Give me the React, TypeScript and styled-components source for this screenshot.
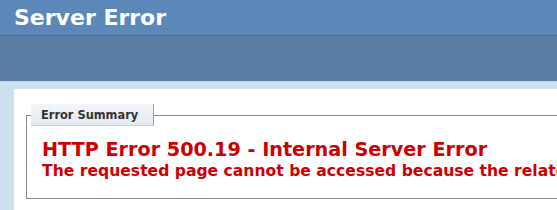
import React from "react";
import styled, { createGlobalStyle } from "styled-components";

const Global = createGlobalStyle`
  html, body { margin: 0; padding: 0; }
  body {
    background: #cde0ee;
    font-family: "DejaVu Sans", Verdana, sans-serif;
    overflow: hidden;
  }
`;

const Header = styled.header`
  box-sizing: border-box;
  height: 35px;
  padding: 5px 14px 0 14px;
  background: #5b88b8;
  color: #fff;
`;

const Title = styled.h1`
  margin: 0;
  font-size: 22px;
  font-weight: bold;
  color: #fff;
  white-space: nowrap;
`;

const ServerBar = styled.div`
  height: 45px;
  background: #5b7ea5;
  border-top: 1px solid #4a6c8e;
  border-bottom: 1px solid #c1cfdd;
`;

const Content = styled.div`
  margin: 7px 0 0 14px;
  overflow: hidden;
`;

const SummaryBox = styled.div`
  background: #fff;
  padding: 15px 0 11px 12px;
`;

const Fieldset = styled.fieldset`
  margin: 0;
  padding: 0 15px 18px 15px;
  border: 1px solid #8a8a8a;
  border-right: none;
  min-width: 0;
  overflow: hidden;
`;

const Legend = styled.legend`
  box-sizing: border-box;
  height: 22px;
  margin: 0 0 0 -11px;
  padding: 3px 15px 3px 10px;
  font-size: 11.4px;
  line-height: 16px;
  font-weight: bold;
  color: #333;
  background: linear-gradient(#f3f6f9, #e2e9f0);
  border-right: 1px solid #9aa2aa;
  border-bottom: 1px solid #c9d1d9;
`;

const ErrorTitle = styled.h2`
  margin: 12px 0 0 0;
  font-size: 19.2px;
  font-weight: bold;
  color: #cc0000;
  white-space: nowrap;
`;

const ErrorText = styled.h3`
  margin: 1px 0 0 0;
  font-size: 15.6px;
  font-weight: bold;
  color: #cc0000;
  white-space: nowrap;
`;

export default function App() {
  return (
    <>
      <Global />
      <Header>
        <Title>Server Error</Title>
      </Header>
      <ServerBar />
      <Content>
        <SummaryBox>
          <Fieldset>
            <Legend>Error Summary</Legend>
            <ErrorTitle>HTTP Error 500.19 - Internal Server Error</ErrorTitle>
            <ErrorText>
              The requested page cannot be accessed because the related configuration data for the page is invalid.
            </ErrorText>
          </Fieldset>
        </SummaryBox>
      </Content>
    </>
  );
}
